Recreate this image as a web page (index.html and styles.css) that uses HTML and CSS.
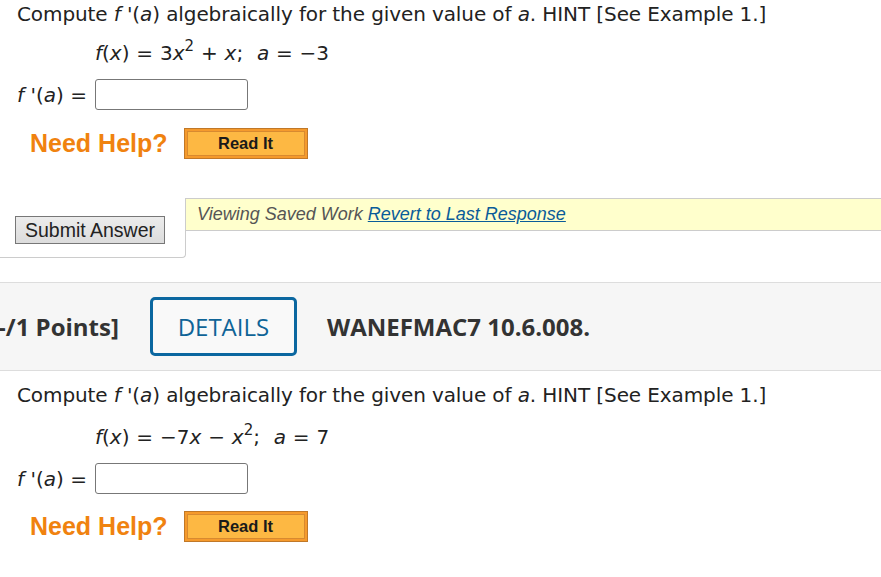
FILE: index.html
```html
<!DOCTYPE html>
<html>
<head>
<meta charset="utf-8">
<link rel="stylesheet" href="styles.css">
</head>
<body>
<div class="q">
  <p class="prompt">Compute <i>f</i> '(<i>a</i>) algebraically for the given value of <i>a</i>. HINT [See Example 1.]</p>
  <p class="formula"><i>f</i>(<i>x</i>) = 3<i>x</i><sup>2</sup> + <i>x</i>;&nbsp; <i>a</i> = &minus;3</p>
  <div class="answer"><span><i>f</i> '(<i>a</i>) =</span><span class="box"></span></div>
  <div class="help"><span class="need">Need Help?</span><span class="readit"><span>Read It</span></span></div>
</div>
<div class="submitrow">
  <div class="submitbox"><span class="submit">Submit Answer</span></div>
  <div class="saved"><i>Viewing Saved Work <a href="#">Revert to Last Response</a></i></div>
</div>
<div class="header">
  <span class="points">-/1 Points]</span>
  <span class="details">DETAILS</span>
  <span class="code">WANEFMAC7 10.6.008.</span>
</div>
<div class="q q2">
  <p class="prompt">Compute <i>f</i> '(<i>a</i>) algebraically for the given value of <i>a</i>. HINT [See Example 1.]</p>
  <p class="formula"><i>f</i>(<i>x</i>) = &minus;7<i>x</i> &minus; <i>x</i><sup>2</sup>;&nbsp; <i>a</i> = 7</p>
  <div class="answer"><span><i>f</i> '(<i>a</i>) =</span><span class="box"></span></div>
  <div class="help"><span class="need">Need Help?</span><span class="readit"><span>Read It</span></span></div>
</div>
</body>
</html>
```
FILE: styles.css
```css
html, body { margin: 0; padding: 0; background: #fff; }
body { width: 881px; height: 577px; overflow: hidden; font-family: "DejaVu Sans", Verdana, sans-serif; color: #222; }
.q { padding-left: 17px; }
.prompt { margin: 0; font-size: 20px; line-height: 26px; padding-top: 1px; letter-spacing: -0.1px; }
.formula { margin: 0; font-size: 20px; line-height: 26px; padding-left: 78px; margin-top: 13px; word-spacing: 0.5px; }
.formula sup { font-size: 15px; line-height: 0; vertical-align: 9px; }
i { font-style: oblique; }
.answer { display: flex; align-items: center; gap: 8px; margin-top: 13px; font-size: 20px; }
.box { display: inline-block; width: 151px; height: 29px; border: 1px solid #777; border-radius: 3px; background: #fff; }
.help { display: flex; align-items: center; margin-top: 18px; padding-left: 13px; gap: 16px; }
.need { font-family: "Liberation Sans", Arial, sans-serif; font-weight: bold; font-size: 25px; color: #f0820f; }
.readit { display: inline-block; box-sizing: border-box; width: 124px; height: 31px; background: #f59a2c; border: 1px solid #c07828; padding: 2px; }
.readit span { display: flex; align-items: center; justify-content: center; height: 100%; box-sizing: border-box; background: #fdb843; border: 1px solid #d88a30; font-family: "Liberation Sans", Arial, sans-serif; font-weight: bold; font-size: 16.5px; color: #1a1a1a; }
.submitrow { display: flex; margin-top: 39px; }
.submitbox { box-sizing: border-box; width: 186px; height: 60px; border-right: 1px solid #ccc; border-bottom: 1px solid #ccc; border-bottom-right-radius: 4px; padding: 18px 0 0 15px; }
.submit { display: inline-block; box-sizing: border-box; width: 150px; height: 28px; border: 1px solid #777; background: linear-gradient(#ececec, #dcdcdc); font-family: "Liberation Sans", Arial, sans-serif; font-size: 19.5px; line-height: 26px; text-align: center; color: #222; }
.saved { flex: 1; box-sizing: border-box; height: 33px; background: #ffffcc; border-top: 1px solid #ccc; border-bottom: 1px solid #ccc; padding-left: 11px; font-family: "Liberation Sans", Arial, sans-serif; font-size: 18px; line-height: 31px; color: #555; }
.saved a { color: #0a5c99; }
.header { display: flex; align-items: center; box-sizing: border-box; height: 89px; margin-top: 24px; background: #f6f6f6; border-top: 1px solid #ddd; border-bottom: 1px solid #ddd; font-family: "Open Sans", sans-serif; font-size: 24px; color: #333; }
.points { font-weight: bold; margin-left: -2px; }
.details { display: inline-flex; align-items: center; justify-content: center; box-sizing: border-box; width: 147px; height: 59px; margin-left: 31px; border: 3px solid #0b67a0; border-radius: 5px; background: #f9f9f9; color: #0f6497; }
.code { font-weight: bold; margin-left: 30px; }
.q2 .prompt { margin-top: 10px; }
.q2 .formula { margin-top: 16px; }
.q2 .help { margin-top: 17px; }
```
